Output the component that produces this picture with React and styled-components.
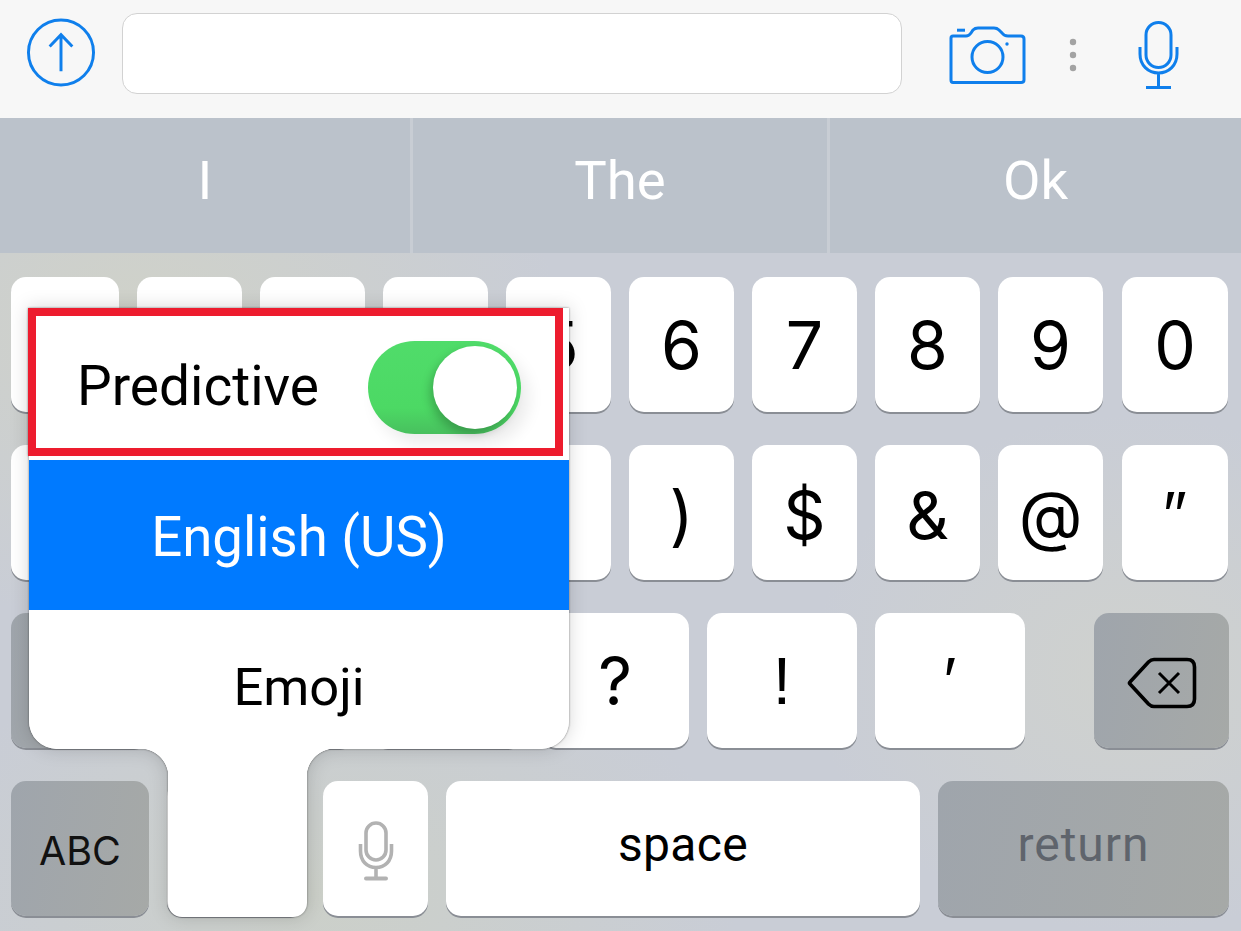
import React from "react";
import styled, { createGlobalStyle } from "styled-components";

const GlobalStyle = createGlobalStyle`
  html, body {
    margin: 0;
    padding: 0;
    width: 1241px;
    height: 931px;
    overflow: hidden;
    font-family: Roboto, "Liberation Sans", sans-serif;
  }
`;

const Screen = styled.div`
  width: 1241px;
  height: 931px;
  display: flex;
  flex-direction: column;
  overflow: hidden;
`;

const TopBar = styled.header`
  height: 118px;
  background: #f7f7f7;
  display: flex;
  align-items: center;
`;

const IconSlot = styled.div`
  flex: none;
  display: flex;
  width: ${(p) => p.$w}px;
  margin-left: ${(p) => p.$ml || 0}px;
  margin-top: ${(p) => p.$mt || 0}px;
`;

const MessageInput = styled.div`
  flex: none;
  width: 778px;
  height: 79px;
  margin: -12px 0 0 26px;
  background: #fff;
  border: 1px solid #d2d2d2;
  border-radius: 15px;
`;

const Suggestions = styled.div`
  height: 135px;
  background: #bbc2cb;
  display: flex;
`;

const Suggestion = styled.div`
  width: ${(p) => p.$w}px;
  flex: none;
  display: flex;
  align-items: center;
  justify-content: center;
  padding-bottom: 12px;
  box-sizing: border-box;
  color: #fff;
  font-size: 54.5px;
  border-right: ${(p) => (p.$last ? "none" : "3px solid #c8cdd4")};
`;

const Keyboard = styled.main`
  flex: 1;
  position: relative;
  padding: 24px 11px 0;
  display: flex;
  flex-direction: column;
  gap: 34px;
  background:
    radial-gradient(ellipse 420px 300px at 140px 70px, rgba(208, 210, 200, 0.95), rgba(208, 210, 200, 0) 100%),
    radial-gradient(ellipse 420px 260px at 320px 640px, rgba(204, 208, 200, 0.95), rgba(204, 208, 200, 0) 100%),
    radial-gradient(ellipse 320px 260px at 1130px 420px, rgba(208, 210, 205, 0.9), rgba(208, 210, 205, 0) 100%),
    #c9cdd6;
`;

const KeyRow = styled.div`
  display: flex;
  gap: 18px;
  height: 134px;
`;

const Key = styled.div`
  flex: none;
  width: ${(p) => p.$w}px;
  margin-left: ${(p) => p.$ml || 0}px;
  height: 135px;
  border-radius: 15px;
  display: flex;
  align-items: center;
  justify-content: center;
  padding-top: ${(p) => p.$pt || 0}px;
  box-sizing: border-box;
  background: ${(p) => (p.$dark ? "linear-gradient(100deg, #9fa5ac, #a6a9a7)" : "#fff")};
  box-shadow: 0 2px 0 #8a8e95;
  color: #000;
  font-family: ${(p) => (p.$thin ? '"Liberation Sans"' : 'Inter, "Liberation Sans"')}, sans-serif;
  font-size: 66px;
`;

const WordLabel = styled.span`
  font-family: Roboto, sans-serif;
  font-size: 48px;
  letter-spacing: ${(p) => p.$ls || 0}px;
  margin-top: -8px;
  color: ${(p) => p.$color || "#000"};
`;

const AbcLabel = styled.span`
  font-family: Inter, "Liberation Sans", sans-serif;
  font-size: 39.5px;
  margin-top: 4px;
  color: #111;
`;

const Popup = styled.div`
  position: absolute;
  left: 29px;
  top: 55px;
  width: 540px;
  filter: drop-shadow(0 0 1.2px rgba(40, 40, 40, 0.55)) drop-shadow(0 0 9px rgba(0, 0, 0, 0.16));
`;

const PopupBody = styled.div`
  background: #fff;
  border-radius: 0 0 28px 28px;
  overflow: hidden;
`;

const PredictiveRow = styled.div`
  height: 152px;
  box-sizing: border-box;
  padding: 4px 48px 0 48px;
  display: flex;
  align-items: center;
  justify-content: space-between;
  color: #000;
  font-size: 55px;
`;

const Option = styled.div`
  height: ${(p) => p.$h}px;
  box-sizing: border-box;
  padding-top: ${(p) => p.$pt}px;
  display: flex;
  align-items: center;
  justify-content: center;
  font-size: ${(p) => p.$size}px;
  color: ${(p) => (p.$active ? "#fff" : "#000")};
  background: ${(p) => (p.$active ? "#007aff" : "#fff")};
`;

const Toggle = styled.div`
  width: 153px;
  height: 93px;
  margin-top: 2px;
  border-radius: 47px;
  box-sizing: border-box;
  padding: 5px 4px 5px 0;
  display: flex;
  justify-content: flex-end;
  background: linear-gradient(180deg, #50dc6a 0%, #4cd964 72%, #48c05e 100%);
  box-shadow: 8px 10px 16px rgba(0, 0, 0, 0.08);
`;

const Knob = styled.div`
  width: 84px;
  height: 83px;
  border-radius: 50%;
  background: #fff;
  box-shadow: -3px 5px 10px rgba(0, 0, 0, 0.22);
`;

const Highlight = styled.div`
  position: absolute;
  left: -1px;
  top: 0;
  width: 535px;
  height: 148px;
  box-sizing: border-box;
  border: 8px solid #ed1c2e;
  pointer-events: none;
`;

const Stem = styled.div`
  position: relative;
  width: 139px;
  height: 168px;
  margin-left: 139px;
  background: #fff;
  border-radius: 0 0 14px 14px;

  &::before,
  &::after {
    content: "";
    position: absolute;
    top: -1px;
    width: 28px;
    height: 29px;
  }
  &::before {
    right: 100%;
    background: radial-gradient(circle at 0 100%, transparent 28px, #fff 28.6px);
  }
  &::after {
    left: 100%;
    background: radial-gradient(circle at 100% 100%, transparent 28px, #fff 28.6px);
  }
`;

const UploadIcon = () => (
  <svg width="70" height="70" viewBox="25 18 71 71" fill="none" stroke="#0f7fec" strokeWidth="3">
    <circle cx="60.5" cy="53" r="33" />
    <path d="M60.5 72V35M49 47l11.5-12L72 47" />
  </svg>
);

const CameraIcon = () => (
  <svg width="78" height="60" viewBox="949 25 78 60" fill="none" stroke="#0f7fec" strokeWidth="3">
    <path d="M953 36H966Q969 36 971 33L973 30Q975 28 978 28H994Q997 28 999 30L1002 33Q1004 36 1008 36H1021Q1024 36 1024 39V80Q1024 82.5 1021 82.5H953Q951 82.5 951 80V38Q951 36 953 36Z" />
    <circle cx="987.5" cy="57" r="15.5" />
    <path d="M957 30.2H965" />
    <circle cx="1007" cy="44" r="1.7" fill="#0f7fec" stroke="none" />
  </svg>
);

const DotsIcon = () => (
  <svg width="10" height="36" viewBox="0 0 10 36" fill="#a3a3a3">
    <circle cx="5" cy="5" r="3.2" />
    <circle cx="5" cy="18" r="3.2" />
    <circle cx="5" cy="31" r="3.2" />
  </svg>
);

const MicIcon = () => (
  <svg width="42" height="70" viewBox="1137 20 42 70" fill="none" stroke="#0f7fec" strokeWidth="3">
    <rect x="1146" y="22.5" width="25" height="45" rx="12.5" />
    <path d="M1140 47V54C1140 65 1148 73 1158.5 73S1177 65 1177 54V47M1158.5 73V87M1146 87.5H1171" />
  </svg>
);

const SmallMicIcon = () => (
  <svg width="36" height="60" viewBox="0 0 36 60" fill="none" stroke="#b2b2b2" strokeWidth="3.6">
    <rect x="8" y="2" width="20" height="37" rx="10" />
    <path d="M2.5 23V30C2.5 40 9 46.5 18 46.5S33.500 40 33.500 30V23M18 46.500V57" />
    <path d="M8 57.500H28" strokeWidth="4" strokeLinecap="round" />
  </svg>
);

const BackspaceIcon = () => (
  <svg width="70" height="52" viewBox="0 0 70 52" fill="none" stroke="#000" strokeWidth="3.6" strokeLinejoin="round">
    <path d="M3 25L21.500 5Q24 2.500 27 2.500H60Q67.500 2.500 67.500 10V42Q67.500 49.500 60 49.500H27Q24 49.500 21.500 47L3 27Q2 26 3 25Z" />
    <path d="M32 16L52 36M52 16L32 36" strokeWidth="3" />
  </svg>
);

const digitWidths = [108, 105, 105, 105, 105, 105, 105, 105, 105, 106];
const digitLabels = ["", "", "", "", "5", "6", "7", "8", "9", "0"];
const symbolLabels = ["", "", "", "", "", ")", "$", "&", "@", "″"];

export default function App() {
  return (
    <Screen>
      <GlobalStyle />
      <TopBar>
        <IconSlot $w={70} $ml={26} $mt={-13}>
          <UploadIcon />
        </IconSlot>
        <MessageInput />
        <IconSlot $w={78} $ml={47} $mt={-8}>
          <CameraIcon />
        </IconSlot>
        <IconSlot $w={10} $ml={41} $mt={-8}>
          <DotsIcon />
        </IconSlot>
        <IconSlot $w={42} $ml={59} $mt={-8}>
          <MicIcon />
        </IconSlot>
      </TopBar>
      <Suggestions>
        <Suggestion $w={413}>I</Suggestion>
        <Suggestion $w={417}>The</Suggestion>
        <Suggestion $w={411} $last>
          Ok
        </Suggestion>
      </Suggestions>
      <Keyboard>
        <KeyRow>
          {digitLabels.map((label, i) => (
            <Key key={i} $w={digitWidths[i]} $ml={i === 9 ? 1 : 0}>
              {label}
            </Key>
          ))}
        </KeyRow>
        <KeyRow>
          {symbolLabels.map((label, i) => (
            <Key key={i} $w={digitWidths[i]} $ml={i === 9 ? 1 : 0} $pt={4} $thin={i === 9}>
              {label}
            </Key>
          ))}
        </KeyRow>
        <KeyRow>
          <Key $w={138} $dark />
          <Key $w={150} $ml={38} />
          <Key $w={150} />
          <Key $w={148}>?</Key>
          <Key $w={150} $thin>
            !
          </Key>
          <Key $w={150} $thin>
            ′
          </Key>
          <Key $w={135} $ml={51} $dark $pt={4}>
            <BackspaceIcon />
          </Key>
        </KeyRow>
        <KeyRow>
          <Key $w={138} $dark>
            <AbcLabel>ABC</AbcLabel>
          </Key>
          <Key $w={138} />
          <Key $w={105} $pt={4}>
            <SmallMicIcon />
          </Key>
          <Key $w={474}>
            <WordLabel $ls={0.3}>space</WordLabel>
          </Key>
          <Key $w={291} $dark>
            <WordLabel $ls={1} $color="#5f646c">
              return
            </WordLabel>
          </Key>
        </KeyRow>
        <Popup>
          <PopupBody>
            <PredictiveRow>
              Predictive
              <Toggle>
                <Knob />
              </Toggle>
            </PredictiveRow>
            <Option $h={150} $active $pt={4} $size={54.6}>
              English (US)
            </Option>
            <Option $h={139} $pt={14} $size={52.5}>
              Emoji
            </Option>
          </PopupBody>
          <Stem />
          <Highlight />
        </Popup>
      </Keyboard>
    </Screen>
  );
}
